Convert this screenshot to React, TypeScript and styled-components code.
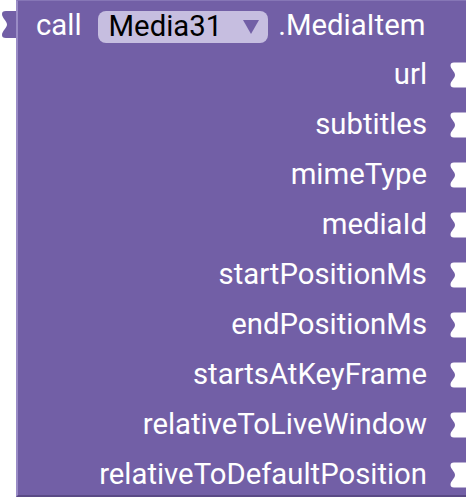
import React from "react";
import styled, { createGlobalStyle } from "styled-components";

const Global = createGlobalStyle`
  html, body { margin: 0; padding: 0; background: #ffffff; }
  body { font-family: Roboto, "Noto Sans", sans-serif; }
`;

const PURPLE = "#725fa6";

const Stage = styled.div`
  display: flex;
  align-items: flex-start;
  width: 466px;
  height: 500px;
  overflow: hidden;
`;

const TabWrap = styled.div`
  width: 16px;
  flex: 0 0 16px;
  padding-top: 11px;
  display: flex;
`;

const Block = styled.div`
  flex: 1;
  height: 497px;
  box-sizing: border-box;
  background: ${PURPLE};
  border-left: 2px solid #9a8cc6;
  border-bottom: 2px solid #5a4a86;
  border-top: 1px solid #8676b6;
  display: flex;
  flex-direction: column;
  overflow: hidden;
  color: #ffffff;
`;

const Header = styled.div`
  height: 49px;
  flex: 0 0 49px;
  display: flex;
  align-items: center;
  padding-left: 18px;
  font-size: 29.3px;
  line-height: 1;
`;

const Word = styled.span`
  margin-right: 16px;
`;

const Dropdown = styled.div`
  height: 32px;
  box-sizing: border-box;
  display: flex;
  align-items: center;
  padding: 0 8px 0 11px;
  border-radius: 8px;
  background: #c6bee0;
  color: #000000;
  margin-right: 10px;
  margin-top: 2px;
`;

const DropText = styled.span`
  margin-right: 20px;
`;

const Row = styled.div`
  height: 50px;
  flex: 0 0 50px;
  display: flex;
  align-items: center;
  justify-content: flex-end;
  font-size: 29.3px;
  line-height: 1;
`;

const Label = styled.span`
  margin-right: 23px;
`;

const SocketSvg = styled.svg`
  display: block;
  flex: 0 0 16px;
`;

const OutputTab = () => (
  <svg width="16" height="27" viewBox="0 0 16 27">
    <path
      d="M16 0 L16 27 L6 27 C3 27 2 26 2 24 C2 20 7 17 7 13.5 C7 10 2 7 2 3 C2 1 3 0 6 0 Z"
      fill={PURPLE}
    />
  </svg>
);

const Socket = () => (
  <SocketSvg width="16" height="26" viewBox="0 0 16 26">
    <path
      d="M16 0.5 L4 0.5 C1.5 0.5 0.5 1.5 0.5 3.5 C0.5 7 5 9.5 5 13 C5 16.5 0.5 19 0.5 22.5 C0.5 24.5 1.5 25.5 4 25.5 L16 25.5 Z"
      fill="#ffffff"
    />
  </SocketSvg>
);

const Triangle = () => (
  <svg width="18" height="16" viewBox="0 0 18 16">
    <path d="M1 1 L17 1 L9 15 Z" fill={PURPLE} />
  </svg>
);

const params = [
  "url",
  "subtitles",
  "mimeType",
  "mediaId",
  "startPositionMs",
  "endPositionMs",
  "startsAtKeyFrame",
  "relativeToLiveWindow",
  "relativeToDefaultPosition",
];

export default function App() {
  return (
    <>
      <Global />
      <Stage>
        <TabWrap>
          <OutputTab />
        </TabWrap>
        <Block>
          <Header>
            <Word>call</Word>
            <Dropdown>
              <DropText>Media31</DropText>
              <Triangle />
            </Dropdown>
            <span>.MediaItem</span>
          </Header>
          {params.map((p) => (
            <Row key={p}>
              <Label>{p}</Label>
              <Socket />
            </Row>
          ))}
        </Block>
      </Stage>
    </>
  );
}
